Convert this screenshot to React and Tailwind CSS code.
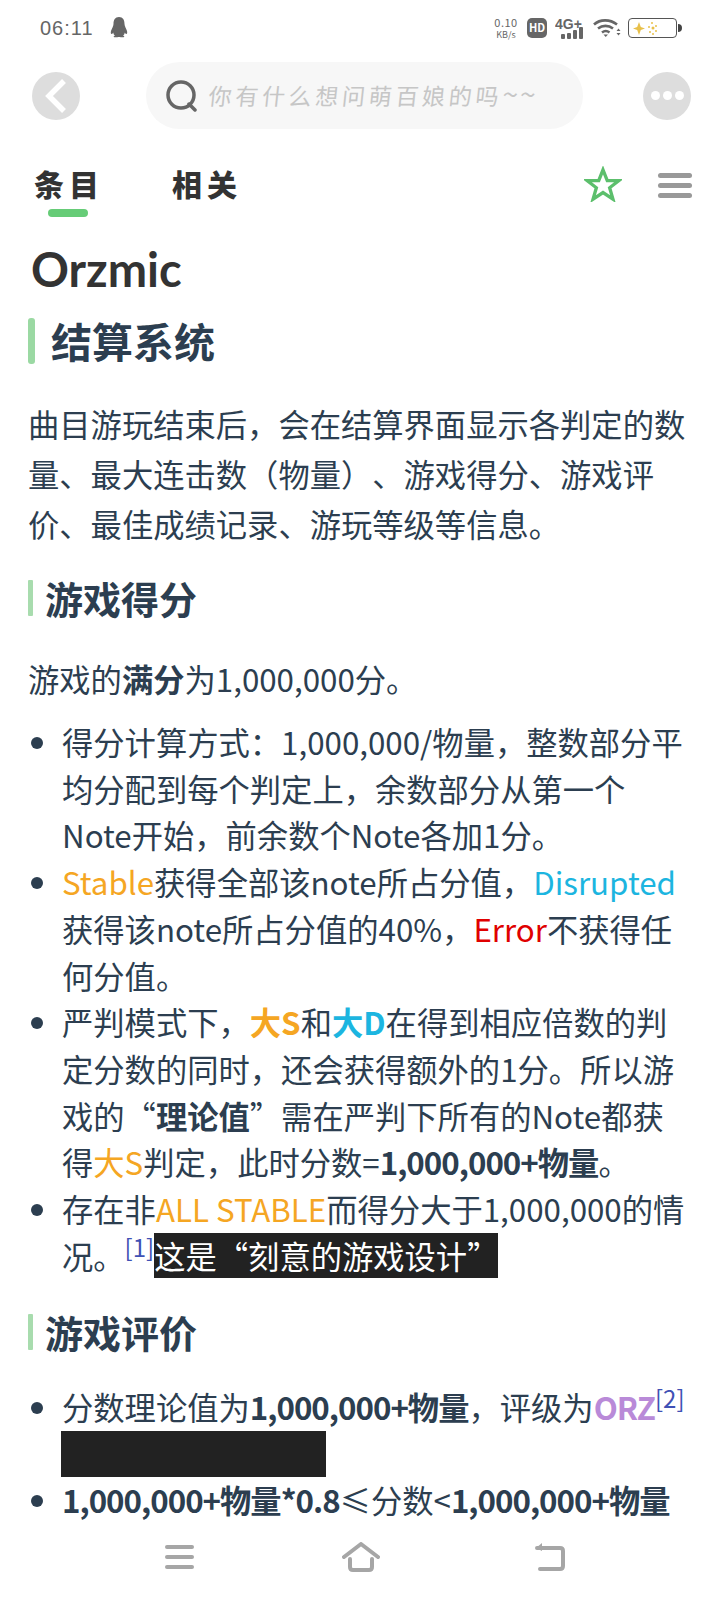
import React from "react";

const Ref = ({ n }) => (
  <sup className="text-[24px] font-normal text-[#3f51b5] leading-none align-baseline">[{n}]</sup>
);

function Penguin() {
  return (
    <svg width="18" height="21" viewBox="0 0 18 21" fill="#666666">
      <path d="M9 0C5 0 3.500 3 3.500 7C3.500 9 2 11 1 14C0.500 16 1 17.500 2 17C2.500 16.800 3 16 3.200 15.500C3.500 17 4 18 5 18.500C3.500 19 3 20.300 5 20.300C7 20.300 8 20 9 20C10 20 11 20.300 13 20.300C15 20.300 14.500 19 13 18.500C14 18 14.500 17 14.800 15.500C15 16 15.500 16.800 16 17C17 17.500 17.500 16 17 14C16 11 14.500 9 14.500 7C14.500 3 13 0 9 0Z" />
    </svg>
  );
}

function StatusIcons() {
  return (
    <div className="flex items-center text-[#666666]">
      <div className="flex flex-col items-center w-[26px] leading-none mr-[8px]">
        <span className="text-[11px] tracking-[0.5px]">0.10</span>
        <span className="text-[9px] mt-[2px]">KB/s</span>
      </div>
      <div className="w-[20px] h-[20px] rounded-[5px] bg-[#666666] text-white text-[11px] font-bold flex items-center justify-center mr-[8px]">
        HD
      </div>
      <svg width="30" height="22" viewBox="0 0 30 22" className="mr-[8px]" fill="#666666">
        <text x="0" y="12" fontSize="14" fontWeight="700" fontFamily="Liberation Sans">4G+</text>
        <rect x="6" y="17" width="4" height="5" rx="1" />
        <rect x="12" y="16" width="4" height="6" rx="1" />
        <rect x="18" y="13" width="4" height="9" rx="1" />
        <rect x="24" y="10" width="4" height="12" rx="1" />
      </svg>
      <svg width="28" height="20" viewBox="0 0 28 20" className="mr-[7px]" fill="none" stroke="#666666" strokeWidth="2.600">
        <path d="M1 6.500C7 1 17 1 24 6.500" />
        <path d="M5 10.500C9.500 7 15.500 7 20 10.500" />
        <path d="M9 14.500C11.500 12.500 14 12.500 16.500 14.500" />
        <path d="M10.500 16.500L12.700 19L15 16.500Z" fill="#666666" stroke="none" />
        <path d="M23.500 13L25.500 10.500L27.500 13ZM23.500 15L25.500 17.500L27.500 15Z" fill="#666666" stroke="none" />
      </svg>
      <div className="relative w-[49px] h-[20px] rounded-[4px] border border-[#555555] flex items-center pl-[4px] gap-[3px]">
        <svg width="30" height="16" viewBox="0 0 30 16" fill="#e8c04a">
          <path d="M6 2L7.800 7L12 8.500L7.800 10L6 15L4.200 10L0 8.500L4.200 7Z" />
          <circle cx="19" cy="3" r="1" />
          <circle cx="23" cy="6" r="1" />
          <circle cx="16" cy="7" r="1" />
          <circle cx="20" cy="8" r="1.500" />
          <circle cx="23" cy="11" r="1" />
          <circle cx="17" cy="12" r="1" />
          <circle cx="20" cy="14" r="1" />
        </svg>
      </div>
      <div className="w-[4px] h-[8px] bg-[#444444] rounded-r-full ml-[1px]" />
    </div>
  );
}

function TopBar() {
  return (
    <div className="flex items-center pl-[32px] pr-[29px] h-[67px] mt-[7px]">
      <div className="w-[48px] h-[48px] rounded-full bg-[#dddddd] flex items-center justify-center">
        <svg width="24" height="36" viewBox="0 0 24 36" fill="none" stroke="#ffffff" strokeWidth="5.500">
          <path d="M20 3L5 18L20 33" />
        </svg>
      </div>
      <div className="w-[437px] h-[67px] ml-[66px] rounded-full bg-[#f7f7f7] flex items-center pl-[20px]">
        <svg width="32" height="32" viewBox="0 0 32 32" fill="none" stroke="#666666" strokeWidth="3.500">
          <circle cx="15" cy="15" r="13" />
          <path d="M23 24L29 30" strokeLinecap="round" />
        </svg>
        <span className="ml-[11px] mt-[-6px] text-[23px] text-[#c6c6c6] tracking-[3.700px] -skew-x-6 whitespace-nowrap">
          你有什么想问萌百娘的吗<span className="text-[28px] tracking-[2px]">~~</span>
        </span>
      </div>
      <div className="w-[48px] h-[48px] ml-auto rounded-full bg-[#dddddd] flex items-center justify-center gap-[3px]">
        <span className="w-[9px] h-[9px] rounded-full bg-white" />
        <span className="w-[9px] h-[9px] rounded-full bg-white" />
        <span className="w-[9px] h-[9px] rounded-full bg-white" />
      </div>
    </div>
  );
}

function Tabs() {
  return (
    <div className="flex items-center justify-between pl-[34px] pr-[28px] h-[70px] mt-[22px]">
      <div className="flex gap-[68px] text-[#333333] text-[30px] font-black tracking-[5px] leading-none mt-[-6px]">
        <div className="relative">
          条目
          <span className="absolute left-[14px] top-[41px] w-[40px] h-[8px] rounded-full bg-[#66cc77]" />
        </div>
        <div>相关</div>
      </div>
      <div className="flex items-center gap-[36px]">
        <svg width="38" height="36" viewBox="0 0 40 38" className="mt-[-5px]" fill="none" stroke="#5cbf6c" strokeWidth="3.500">
          <path d="M20 4L24.500 15.500L36.500 15.500L27 23L30.500 35L20 28L9.500 35L13 23L3.500 15.500L15.500 15.500Z" />
        </svg>
        <div className="flex flex-col gap-[5px] mt-[-2px]">
          <span className="w-[34px] h-[5px] rounded-full bg-[#999999]" />
          <span className="w-[34px] h-[5px] rounded-full bg-[#999999]" />
          <span className="w-[34px] h-[5px] rounded-full bg-[#999999]" />
        </div>
      </div>
    </div>
  );
}

const Heading3 = ({ children, className }) => (
  <h3 className={`flex items-center gap-[12px] h-[37px] text-[38px] font-bold ${className}`}>
    <span className="w-[5px] h-[36px] bg-[#a8dcae] rounded-[1px]" />
    {children}
  </h3>
);

export default function App() {
  return (
    <div lang="zh-CN" className="w-[720px] h-[1600px] overflow-hidden bg-white flex flex-col font-['Noto_Sans_CJK_SC',sans-serif] [text-spacing-trim:space-all]">
      <div className="flex items-center justify-between pl-[40px] pr-[38px] h-[55px] shrink-0">
        <div className="flex items-center gap-[16px]">
          <span className="text-[20px] tracking-[1px] text-[#666666] font-['Liberation_Sans',sans-serif]">06:11</span>
          <Penguin />
        </div>
        <StatusIcons />
      </div>
      <TopBar />
      <Tabs />

      <main className="flex-1 overflow-hidden px-[28px] text-[#2c3e50] text-[31.300px]">
        <h1 className="text-[47px] leading-[60px] ml-[3px] mt-[18px] font-bold text-[#333333] font-['Lato',sans-serif]">Orzmic</h1>
        <h2 className="flex items-center gap-[16px] h-[46px] mt-[19px] text-[41px] font-bold">
          <span className="w-[7px] h-[46px] bg-[#9bd9a3] rounded-[3px]" />
          结算系统
        </h2>
        <p className="mt-[35px] leading-[50px] w-[662px]">
          曲目游玩结束后，会在结算界面显示各判定的数量、最大连击数（物量）、游戏得分、游戏评价、最佳成绩记录、游玩等级等信息。
        </p>
        <Heading3 className="mt-[30px]">游戏得分</Heading3>
        <p className="mt-[38px] leading-[50px]">
          游戏的<b>满分</b>为1,000,000分。
        </p>
        <ul className="mt-[15px] ml-[34px] list-disc leading-[46.700px] w-[630px]">
          <li>得分计算方式：1,000,000/物量，整数部分平均分配到每个判定上，余数部分从第一个Note开始，前余数个Note各加1分。</li>
          <li>
            <span className="text-[#f5a623]">Stable</span>获得全部该note所占分值，
            <span className="text-[#1cb5e0]">Disrupted</span>获得该note所占分值的40%，
            <span className="text-[#e00000]">Error</span>不获得任何分值。
          </li>
          <li>
            严判模式下，<b className="text-[#f5a623]">大S</b>和<b className="text-[#1cb5e0]">大D</b>
            在得到相应倍数的判定分数的同时，还会获得额外的1分。所以游戏的“<b>理论值</b>”需在严判下所有的Note都获得
            <span className="text-[#f5a623]">大S</span>判定，此时分数=<b className="tracking-[-1px]">1,000,000+物量</b>。
          </li>
          <li>
            存在非<span className="text-[#f5a623]">ALL STABLE</span>而得分大于1,000,000的情况。
            <Ref n="1" />
            <span className="bg-[#222222] text-white">这是“刻意的游戏设计”</span>
          </li>
        </ul>
        <Heading3 className="mt-[34px]">游戏评价</Heading3>
        <ul className="mt-[34px] ml-[34px] list-disc leading-[46.700px] w-[630px]">
          <li>
            分数理论值为<b className="tracking-[-1px]">1,000,000+物量</b>，评级为<b className="text-[#b98ad8] tracking-[-1px]">ORZ</b>
            <Ref n="2" />
            <span className="block w-[265px] h-[46px] ml-[-1px] bg-[#222222]" />
          </li>
          <li>
            <b className="tracking-[-1px]">1,000,000+物量*0.8</b>≤分数&lt;<b className="tracking-[-1px]">1,000,000+物量</b>
          </li>
        </ul>
      </main>

      <nav className="h-[64px] shrink-0 flex items-start pt-[6px] pl-[165px]">
        <div className="flex flex-col gap-[6px] w-[29px] mt-[3px]">
          <span className="h-[4px] rounded-full bg-[#a6a6a6]" />
          <span className="h-[4px] rounded-full bg-[#a6a6a6]" />
          <span className="h-[4px] rounded-full bg-[#a6a6a6]" />
        </div>
        <svg width="38" height="30" viewBox="0 0 38 30" className="ml-[148px]" fill="none" stroke="#a6a6a6" strokeWidth="4" strokeLinecap="round" strokeLinejoin="round">
          <path d="M2 15L19 2L36 15" />
          <path d="M8 17V25C8 27 9 28 11 28H27C29 28 30 27 30 25V17" />
        </svg>
        <svg width="32" height="30" viewBox="0 0 32 30" className="ml-[153px]" fill="none" stroke="#a6a6a6" strokeWidth="4" strokeLinecap="round" strokeLinejoin="round">
          <path d="M4 6H27C29 6 30 7 30 9V24C30 26 29 27 27 27H7" />
          <path d="M9 1L3 6L9 9" fill="#a6a6a6" stroke="none" />
        </svg>
      </nav>
    </div>
  );
}
